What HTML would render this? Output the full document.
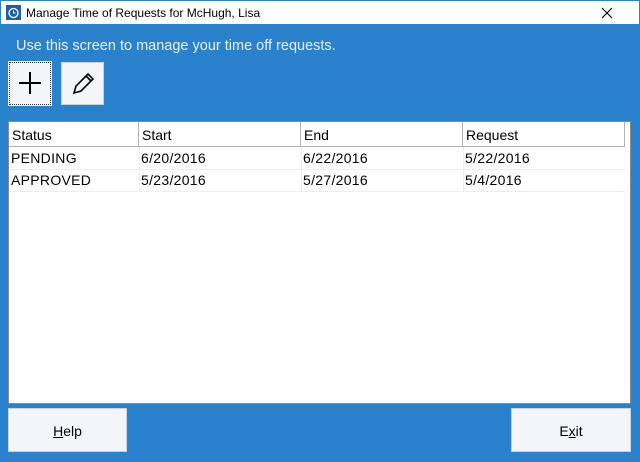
<!DOCTYPE html><html><head><style>
body{margin:0;width:640px;height:462px;background:#2a82cd;position:relative;overflow:hidden;font-family:"Liberation Sans",sans-serif}
.t{position:absolute;left:1px;top:1px;width:638px;height:23px;background:#fff;font-size:12px}
.a{position:absolute}
.btn{position:absolute;background:#f3f5f9;border:1px solid #c8d0da;box-sizing:border-box}
.h{position:absolute;top:0;height:25px;line-height:26px;font-size:14px;border-right:1px solid #b0b0b0;padding-left:3px;box-sizing:border-box}
.c{position:absolute;font-size:14px;padding-left:2px;letter-spacing:.3px}
</style></head><body>
<div class="t">
<svg class="a" style="left:5px;top:4px" width="15" height="15"><rect width="15" height="15" fill="#1f5fa8"/><circle cx="7.5" cy="8" r="4.5" fill="none" stroke="#fff" stroke-width="1.3"/><path d="M7.5 5.5V8H9.5" stroke="#fff" fill="none"/></svg>
<span class="a" style="left:25px;top:5px">Manage Time of Requests for McHugh, Lisa</span>
<svg class="a" style="left:600px;top:6px" width="12" height="12"><path d="M1 1L11 11M11 1L1 11" stroke="#000" stroke-width="1.1"/></svg>
</div>
<div class="a" style="left:16px;top:38px;color:#e6f0fa;font-size:14.5px">Use this screen to manage your time off requests.</div>
<div class="btn" style="left:9px;top:62px;width:42px;height:43px;border:1px dotted #333;outline:1px solid #f3f5f9"><svg width="40" height="41"><path d="M20 9v22M9 20h22" stroke="#000" stroke-width="2"/></svg></div>
<div class="btn" style="left:61px;top:62px;width:43px;height:43px"><svg width="41" height="41"><path d="M12 30l2-7L26 11l5 5L19 28z M24 13l5 5" stroke="#000" stroke-width="1.6" fill="none"/></svg></div>
<div class="a" style="left:8px;top:121px;width:623px;height:283px;background:#fff;border:1px solid #8a8a8a;box-sizing:border-box">
<div class="a" style="left:0;top:0;width:616px;height:25px;border-bottom:1px solid #b0b0b0;box-sizing:border-box"></div>
<div class="h" style="left:0;width:130px">Status</div>
<div class="h" style="left:130px;width:162px">Start</div>
<div class="h" style="left:292px;width:162px">End</div>
<div class="h" style="left:454px;width:162px">Request</div>
<div class="a" style="left:0;top:47px;width:616px;border-top:1px solid #eee"></div>
<div class="a" style="left:0;top:69px;width:616px;border-top:1px solid #eee"></div>
<div class="a" style="left:130px;top:25px;height:44px;border-left:1px solid #eee"></div>
<div class="a" style="left:292px;top:25px;height:44px;border-left:1px solid #eee"></div>
<div class="a" style="left:454px;top:25px;height:44px;border-left:1px solid #eee"></div>
<div class="c" style="left:0;top:28px">PENDING</div><div class="c" style="left:130px;top:28px">6/20/2016</div><div class="c" style="left:292px;top:28px">6/22/2016</div><div class="c" style="left:454px;top:28px">5/22/2016</div>
<div class="c" style="left:0;top:50px">APPROVED</div><div class="c" style="left:130px;top:50px">5/23/2016</div><div class="c" style="left:292px;top:50px">5/27/2016</div><div class="c" style="left:454px;top:50px">5/4/2016</div>
</div>
<div class="btn" style="left:8px;top:408px;width:119px;height:44px;text-align:center;line-height:44px;font-size:14px"><u>H</u>elp</div>
<div class="btn" style="left:511px;top:408px;width:120px;height:44px;text-align:center;line-height:44px;font-size:14px">E<u>x</u>it</div>
</body></html>
